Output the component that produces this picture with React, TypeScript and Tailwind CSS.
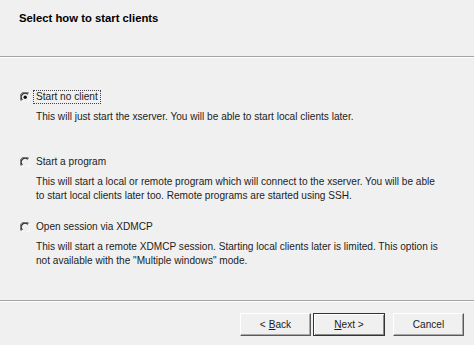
import { ReactNode } from "react"

function Radio({ checked }: { checked?: boolean }) {
  return (
    <svg width="10" height="10" viewBox="0 0 10 10" className="shrink-0">
      <path d="M8.9 1.6 A4.7 4.7 0 0 0 1.6 8.9" fill="none" stroke="#7a7a7a" strokeWidth="1.2" />
      <path d="M7.9 2.4 A3.6 3.6 0 0 0 2.4 7.9" fill="none" stroke="#2a2a2a" strokeWidth="1.2" />
      <path d="M8.9 1.6 A4.7 4.7 0 0 1 1.6 8.9" fill="none" stroke="#ffffff" strokeWidth="1" />
      {checked && <circle cx="5.2" cy="5.2" r="1.7" fill="#111" />}
    </svg>
  )
}

function Option({
  label,
  checked,
  focused,
  children,
}: {
  label: string
  checked?: boolean
  focused?: boolean
  children: ReactNode
}) {
  return (
    <div className="flex flex-col">
      <div className="flex h-[14px] items-center">
        <Radio checked={checked} />
        <span
          className={
            focused
              ? "ml-[3px] border border-dotted border-[#444] px-[2px] leading-[12px]"
              : "ml-[6px] leading-[14px]"
          }
        >
          {label}
        </span>
      </div>
      <p className="mt-[6px] h-[38px] pl-[16px] leading-[14px]">{children}</p>
    </div>
  )
}

function Button({ children, primary }: { children: ReactNode; primary?: boolean }) {
  return (
    <div
      className={
        primary
          ? "flex h-[23px] w-[72px] items-center justify-center border border-[#333] bg-[#f0f0f0] shadow-[inset_1px_1px_0_#fff,inset_-1px_-1px_0_#8a8a8a]"
          : "flex h-[23px] w-[71px] items-center justify-center border border-t-white border-l-white border-r-[#5a5a5a] border-b-[#5a5a5a] bg-[#f0f0f0] shadow-[inset_-1px_-1px_0_#a8a8a8]"
      }
    >
      {children}
    </div>
  )
}

export default function App() {
  return (
    <div
      className="flex h-[345px] w-[474px] flex-col bg-[#f0f0f0] text-[10.1px] text-[#1c1c1c]"
      style={{ fontFamily: '"Liberation Sans", Arial, sans-serif' }}
    >
      <div className="h-[56px] pl-[19px] pt-[11px]">
        <h1 className="text-[11.3px] font-bold leading-[14px] text-black">Select how to start clients</h1>
      </div>
      <div className="border-t border-b border-t-[#a3a3a3] border-b-white" />

      <div className="flex h-[242px] flex-col gap-[7px] pl-[20px] pt-[32px]">
        <Option label="Start no client" checked focused>
          This will just start the xserver. You will be able to start local clients later.
        </Option>
        <Option label="Start a program">
          This will start a local or remote program which will connect to the xserver. You will be able
          <br />
          to start local clients later too. Remote programs are started using SSH.
        </Option>
        <Option label="Open session via XDMCP">
          This will start a remote XDMCP session. Starting local clients later is limited. This option is
          <br />
          not available with the "Multiple windows" mode.
        </Option>
      </div>

      <div className="border-t border-b border-t-[#a3a3a3] border-b-white" />

      <div className="flex pt-[11px] pr-[10px] justify-end">
        <Button>
          &lt; <span className="ml-[3px] underline">B</span>ack
        </Button>
        <div className="ml-[2px]">
          <Button primary>
            <span className="underline">N</span>ext &gt;
          </Button>
        </div>
        <div className="ml-[8px]">
          <Button>Cancel</Button>
        </div>
      </div>
    </div>
  )
}
